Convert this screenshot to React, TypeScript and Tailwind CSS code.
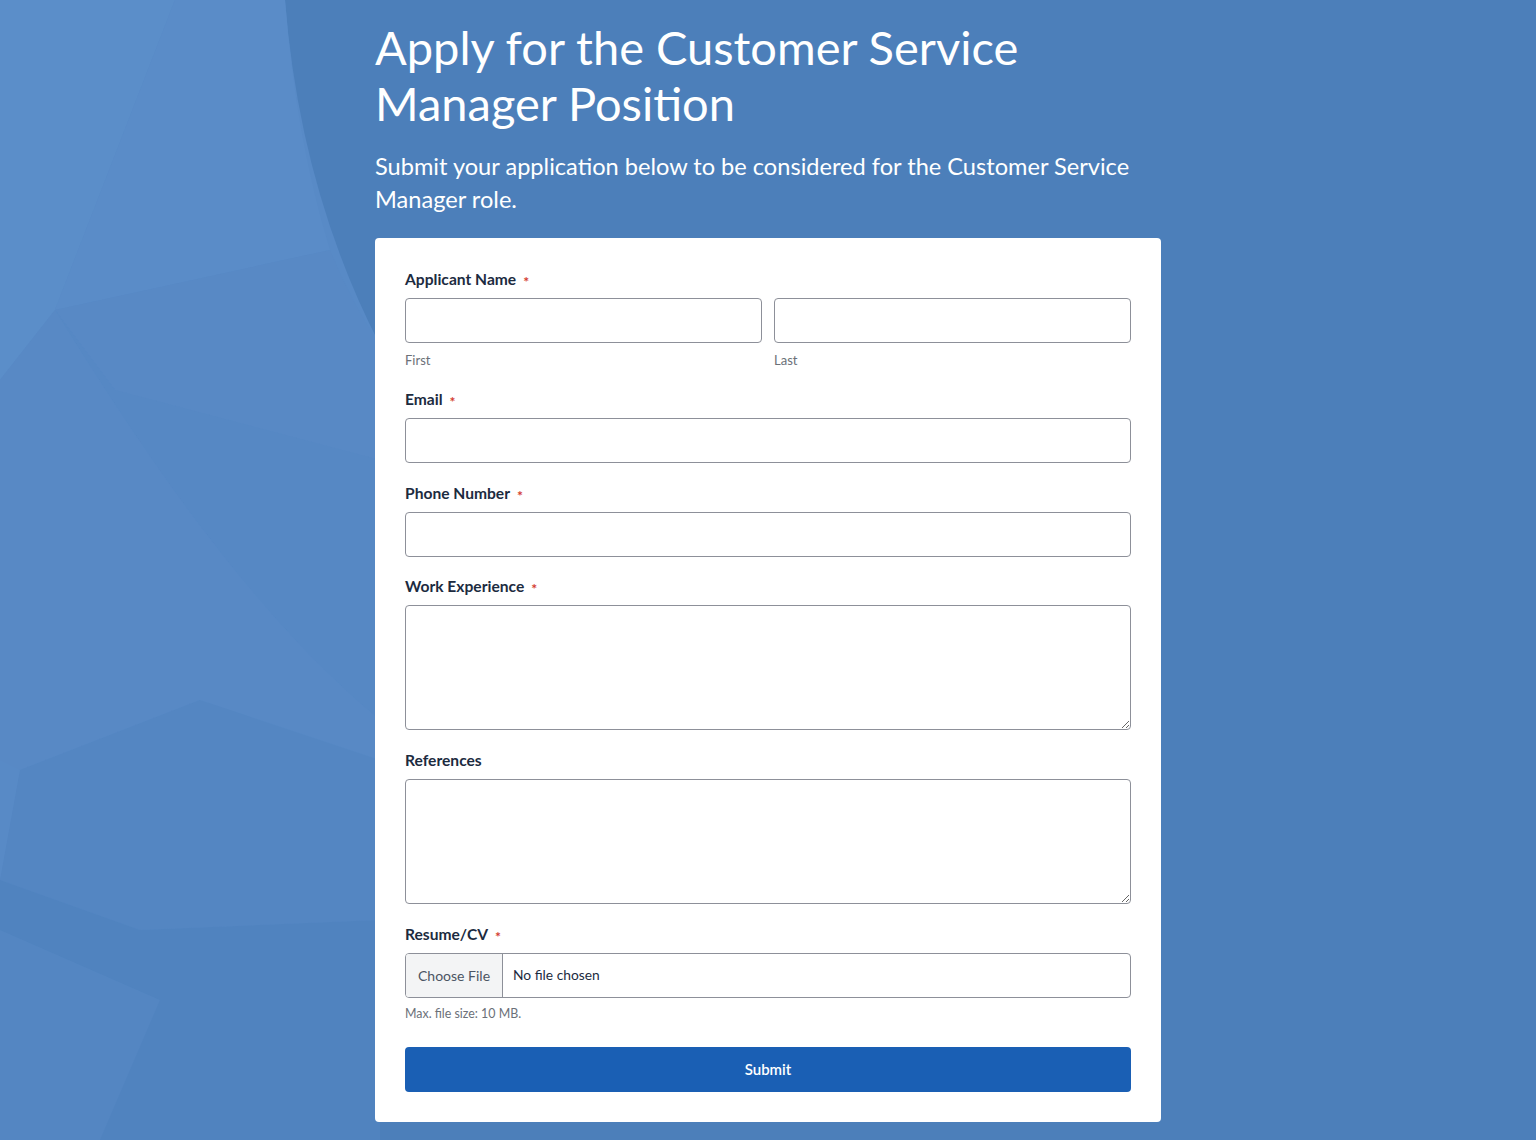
import type { ReactNode } from "react";

function Label({ children, required }: { children: ReactNode; required?: boolean }) {
  return (
    <div className="mb-[9px] flex items-center text-[15.6px] font-bold leading-5 text-[#1c2b3f]">
      {children}
      {required && <span className="ml-[7px] translate-y-[3px] text-[14px] leading-none text-[#d33b2f]">*</span>}
    </div>
  );
}

const inputCls =
  "block h-[45px] w-full rounded-[4px] border border-[#8d9099] bg-white px-3 text-[15px] text-[#1c2b3f] outline-none";

function Backdrop() {
  return (
    <svg className="pointer-events-none absolute inset-0 h-full w-full" viewBox="0 0 1536 1140" preserveAspectRatio="none">
      <path d="M0 0 H285 Q300 190 380 345 V1140 H0 Z" fill="#588ac6" />
      <path d="M0 0 H175 L55 310 L0 380 Z" fill="#5b8ec9" />
      <path d="M175 0 H285 Q296 140 330 250 L55 310 Z" fill="#5a8cc8" />
      <path d="M55 310 L330 250 Q350 300 380 345 V460 L115 390 Z" fill="#5889c5" />
      <path d="M55 310 L115 390 L380 460 V720 C260 620 160 480 55 310 Z" fill="#5688c4" />
      <path d="M0 380 L55 310 C160 480 260 620 380 720 V760 L200 700 L20 770 L0 760 Z" fill="#5889c5" />
      <path d="M20 770 L200 700 L380 760 V920 L140 930 L0 880 Z" fill="#5486c2" />
      <path d="M0 880 L140 930 L380 920 V1140 H0 Z" fill="#5083bf" />
      <path d="M0 930 L160 1000 L100 1140 H0 Z" fill="#5486c2" />
    </svg>
  );
}

export default function App() {
  return (
    <div className="relative min-h-[1140px] w-full overflow-hidden bg-[#4c7fba] font-['Lato','Noto_Sans',sans-serif]">
      <Backdrop />
      <div className="relative mx-auto w-[786px] pt-[19px]">
        <h1 className="text-[47px] font-normal leading-[56px] text-white">
          Apply for the Customer Service Manager Position
        </h1>
        <p className="mt-[19px] text-[23.6px] leading-[33px] text-white">
          Submit your application below to be considered for the Customer Service Manager role.
        </p>

        <form className="mt-[22px] rounded-[4px] bg-white px-[30px] pb-[30px] pt-[31px]">
          <Label required>Applicant Name</Label>
          <div className="grid grid-cols-2 gap-3">
            <div>
              <input className={inputCls} />
              <div className="mt-[9px] text-[13px] leading-4 text-[#6b7078]">First</div>
            </div>
            <div>
              <input className={inputCls} />
              <div className="mt-[9px] text-[13px] leading-4 text-[#6b7078]">Last</div>
            </div>
          </div>

          <div className="mt-[21px]">
            <Label required>Email</Label>
            <input type="email" className={inputCls} />
          </div>

          <div className="mt-[20px]">
            <Label required>Phone Number</Label>
            <input type="tel" className={inputCls} />
          </div>

          <div className="mt-[19px]">
            <Label required>Work Experience</Label>
            <textarea className="block h-[125px] w-full resize-y rounded-[4px] border border-[#8d9099] px-3 py-2 text-[15px] outline-none" />
          </div>

          <div className="mt-[20px]">
            <Label>References</Label>
            <textarea className="block h-[125px] w-full resize-y rounded-[4px] border border-[#8d9099] px-3 py-2 text-[15px] outline-none" />
          </div>

          <div className="mt-[20px]">
            <Label required>Resume/CV</Label>
            <div className="flex h-[45px] w-full overflow-hidden rounded-[4px] border border-[#8d9099] text-[14px]">
              <button type="button" className="border-r border-[#8d9099] bg-[#f3f4f5] px-3 text-[#4b5563]">
                Choose File
              </button>
              <span className="flex items-center pl-[10px] text-[13.8px] text-[#1c2b3f]">No file chosen</span>
            </div>
            <div className="mt-[8px] text-[12.4px] leading-4 text-[#6b7078]">Max. file size: 10 MB.</div>
          </div>

          <button
            type="button"
            className="mt-[25px] block h-[45px] w-full rounded-[4px] bg-[#1a5fb4] text-[15px] font-semibold text-white"
          >
            Submit
          </button>
        </form>
      </div>
    </div>
  );
}
